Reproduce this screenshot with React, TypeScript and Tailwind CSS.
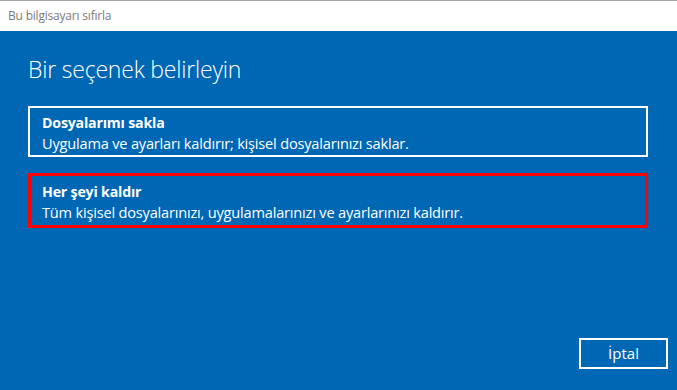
import React from 'react';

const options = [
  {
    title: 'Dosyalarımı sakla',
    desc: 'Uygulama ve ayarları kaldırır; kişisel dosyalarınızı saklar.',
    selected: false,
  },
  {
    title: 'Her şeyi kaldır',
    desc: 'Tüm kişisel dosyalarınızı, uygulamalarınızı ve ayarlarınızı kaldırır.',
    selected: true,
  },
];

const App: React.FC = () => {
  return (
    <div
      className="w-[677px] h-[390px] flex flex-col overflow-hidden"
      style={{ fontFamily: '"Open Sans", "Noto Sans", sans-serif' }}
    >
      {/* başlık çubuğu */}
      <div className="h-[31px] shrink-0 bg-white border-t border-[#a6a6a6] flex items-center pl-[8px]">
        <span className="text-[12px] text-[#7a7a7a] tracking-[-0.2px]">Bu bilgisayarı sıfırla</span>
      </div>

      <div className="flex-1 bg-[#0067b4] flex flex-col px-[28px]">
        <h1 className="text-[23px] font-light text-white mt-[23px] leading-[30px] tracking-[-0.2px]">
          Bir seçenek belirleyin
        </h1>

        <div className="mt-[22px] mr-[1px] flex flex-col gap-[16px]">
          {options.map((o) => (
            <div
              key={o.title}
              className={
                o.selected
                  ? 'border-[3px] border-[#ff0000] h-[55px] pl-[11px] pt-[6px]'
                  : 'border-2 border-white h-[51px] pl-[12px] pt-[5px]'
              }
            >
              <p className="text-white text-[14.2px] font-bold leading-[20px] tracking-[-0.2px]">{o.title}</p>
              <p className="text-white text-[14.6px] leading-[20px] tracking-[-0.2px]">{o.desc}</p>
            </div>
          ))}
        </div>

        <div className="flex-1" />

        <div className="flex justify-end -mr-[19px] mb-[21px]">
          <button className="w-[89px] h-[31px] border-2 border-white text-white text-[15px] leading-none">
            İptal
          </button>
        </div>
      </div>
    </div>
  );
};

export default App;
